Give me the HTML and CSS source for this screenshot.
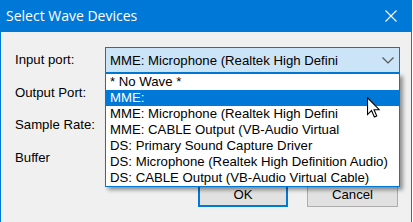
FILE: index.html
```html
<!DOCTYPE html>
<html>
<head>
<meta charset="utf-8">
<link rel="stylesheet" href="styles.css">
</head>
<body>
<div class="window">
  <div class="titlebar">
    <span class="title">Select Wave Devices</span>
    <svg class="close" width="12" height="12" viewBox="0 0 12 12"><path d="M0.5 0.5 L11.5 11.5 M11.5 0.5 L0.5 11.5" stroke="#fff" stroke-width="1.1" fill="none"/></svg>
  </div>
  <div class="body">
    <div class="form">
      <div class="label">Input port:</div>
      <div class="combo-wrap">
        <div class="combo open">
          <span class="combo-text">MME: Microphone (Realtek High Defini</span>
          <svg class="chev" width="12" height="7" viewBox="0 0 12 7"><path d="M0.5 0.5 L6 6 L11.5 0.5" stroke="#555" stroke-width="1.2" fill="none"/></svg>
        </div>
        <ul class="list">
          <li>* No Wave *</li>
          <li class="sel">MME:</li>
          <li>MME: Microphone (Realtek High Defini</li>
          <li>MME: CABLE Output (VB-Audio Virtual</li>
          <li>DS: Primary Sound Capture Driver</li>
          <li>DS: Microphone (Realtek High Definition Audio)</li>
          <li>DS: CABLE Output (VB-Audio Virtual Cable)</li>
        </ul>
      </div>
      <div class="label">Output Port:</div>
      <div class="combo"></div>
      <div class="label">Sample Rate:</div>
      <div class="combo"></div>
      <div class="label">Buffer</div>
      <div class="edit"></div>
    </div>
    <div class="buttons">
      <div class="btn default">OK</div>
      <div class="btn">Cancel</div>
    </div>
  </div>
  <svg class="cursor" width="13" height="21" viewBox="0 0 12 19"><path d="M0.5 0.5 L0.5 16 L4.2 12.3 L6.8 18.3 L9 17.4 L6.5 11.5 L11.3 11.5 Z" fill="#fff" stroke="#000" stroke-width="1" stroke-linejoin="miter"/></svg>
</div>
</body>
</html>
```
FILE: styles.css
```css
html, body {
  margin: 0;
  padding: 0;
  background: #ffffff;
  overflow: hidden;
}
.window {
  position: relative;
  width: 410px;
  height: 222px;
  overflow: hidden;
  border-left: 1px solid #0078d7;
  border-right: 1px solid #0078d7;
  background: #f0f0f0;
  font-family: "Liberation Sans", Arial, sans-serif;
  font-size: 13.2px;
  color: #000;
}
.titlebar {
  height: 32px;
  background: #0078d7;
  display: flex;
  align-items: center;
  justify-content: space-between;
  padding: 0 14px 0 5px;
}
.title {
  font-family: "Open Sans", "Noto Sans", sans-serif;
  font-size: 14px;
  color: #fff;
  padding-bottom: 2px;
}
.close {
  display: block;
}
.body {
  padding: 15px 13px 0 14px;
}
.form {
  display: grid;
  grid-template-columns: 90px 295px;
  grid-auto-rows: 26px;
  row-gap: 6.5px;
  align-items: center;
}
.label {
  line-height: 26px;
}
.combo-wrap {
  position: relative;
  height: 26px;
}
.combo {
  box-sizing: border-box;
  height: 26px;
  border: 1px solid #adadad;
  background: #e1e1e1;
}
.combo.open {
  display: flex;
  align-items: center;
  justify-content: space-between;
  border-color: #0078d7;
  background: #cce4f7;
  padding: 0 5px 0 4px;
}
.chev {
  display: block;
}
.edit {
  box-sizing: border-box;
  height: 24px;
  border: 1px solid #7a7a7a;
  background: #fff;
}
.list {
  position: absolute;
  z-index: 5;
  left: 0;
  top: 26px;
  width: 295px;
  box-sizing: border-box;
  margin: 0;
  padding: 0;
  list-style: none;
  background: #fff;
  border: 1px solid #0078d7;
  box-shadow: 3px 3px 4px rgba(0, 0, 0, 0.4);
}
.list li {
  height: 16px;
  line-height: 16px;
  padding-left: 4px;
  white-space: nowrap;
  overflow: hidden;
}
.list li.sel {
  background: #0078d7;
  color: #fff;
}
.buttons {
  display: flex;
  justify-content: flex-end;
  gap: 19px;
  margin-top: 11px;
}
.btn {
  box-sizing: border-box;
  width: 91px;
  height: 25px;
  border: 1px solid #adadad;
  background: #e1e1e1;
  display: flex;
  align-items: center;
  justify-content: center;
}
.btn.default {
  width: 90px;
  border: 2px solid #0078d7;
}
.cursor {
  position: absolute;
  z-index: 10;
  left: 366px;
  top: 97px;
}
```
